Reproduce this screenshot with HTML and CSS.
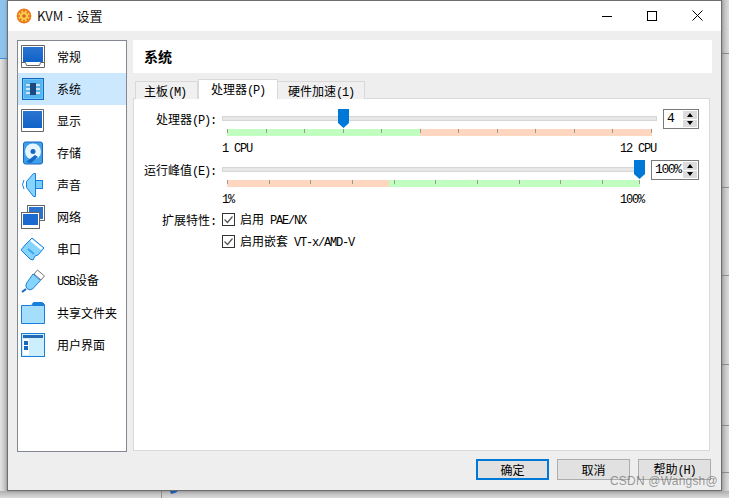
FILE: index.html
```html
<!DOCTYPE html>
<html lang="zh">
<head>
<meta charset="utf-8">
<title>KVM - 设置</title>
<link rel="stylesheet" href="styles.css">
</head>
<body>
<div class="desktop">
  <svg class="backdrop" width="729" height="498" viewBox="0 0 729 498">
    <defs>
      <linearGradient id="rs" x1="0" x2="1" y1="0" y2="0"><stop offset="0" stop-color="#b4b4b4"/><stop offset="1" stop-color="#dcdcdc"/></linearGradient>
      <linearGradient id="ls" x1="0" x2="1" y1="0" y2="0"><stop offset="0" stop-color="#e4e4e4"/><stop offset="1" stop-color="#b8b8b8"/></linearGradient>
      <linearGradient id="bs" x1="0" x2="0" y1="0" y2="1"><stop offset="0" stop-color="#b0b0b0"/><stop offset="1" stop-color="#dadada"/></linearGradient>
    </defs>
    <rect x="722" width="7" height="498" fill="url(#rs)"/>
    <rect y="0" width="7" height="498" fill="url(#ls)"/>
    <rect y="0" width="7" height="58" fill="#8fc2ee"/>
    <rect y="58" width="7" height="1" fill="#3d8fd8"/>
    <rect y="491" width="729" height="7" fill="url(#bs)"/>
    <g fill="#8c8c8c">
      <rect x="722" y="53" width="7" height="1"/><rect x="722" y="187" width="7" height="1"/>
      <rect x="722" y="275" width="7" height="1"/><rect x="722" y="364" width="7" height="1"/>
      <rect x="722" y="425" width="7" height="1"/><rect x="722" y="472" width="7" height="1"/>
      <rect x="161" y="491" width="1" height="7"/>
    </g>
    <path d="M170 491l8 0-3 2-4 1z" fill="#1f63b5"/>
    <g fill="#222"><rect x="219" y="490" width="2" height="1"/><rect x="225" y="490" width="2" height="1"/><rect x="231" y="490" width="2" height="1"/><rect x="237" y="490" width="2" height="1"/></g>
  </svg>

  <div class="window">
    <header class="titlebar">
      <svg class="app-icon" width="16" height="16" viewBox="0 0 16 16">
        <circle cx="8" cy="8" r="7.4" fill="#e87d1e"/>
        <circle cx="8" cy="8" r="5.8" fill="#f7c94a"/>
        <g fill="#e8661c"><circle cx="8" cy="3" r="1"/><circle cx="8" cy="13" r="1"/><circle cx="3" cy="8" r="1"/><circle cx="13" cy="8" r="1"/><circle cx="4.5" cy="4.5" r="1"/><circle cx="11.5" cy="4.5" r="1"/><circle cx="4.5" cy="11.5" r="1"/><circle cx="11.5" cy="11.5" r="1"/></g>
        <rect x="6.6" y="6.6" width="2.8" height="2.8" fill="#d9541e"/>
      </svg>
      <span class="title-text">KVM - 设置</span>
      <div class="controls">
        <svg width="10" height="10" viewBox="0 0 10 10"><path d="M0 5.5h10" stroke="#000" fill="none"/></svg>
        <svg width="10" height="10" viewBox="0 0 10 10"><rect x=".5" y=".5" width="9" height="9" stroke="#000" fill="none"/></svg>
        <svg width="11" height="11" viewBox="0 0 11 11"><path d="M.5.5l10 10M10.500.5l-10 10" stroke="#000" fill="none"/></svg>
      </div>
    </header>

    <div class="content">
      <nav class="sidebar">
        <div class="nav-row">
          <svg class="nav-icon" viewBox="0 0 24 24"><use href="#i-monitor"/></svg><span>常规</span>
        </div>
        <div class="nav-row is-active">
          <svg class="nav-icon" viewBox="0 0 24 24">
            <rect x="1.500" y="1.500" width="21" height="21" fill="#6cc6f5" stroke="#1467c4" stroke-width="1"/>
            <rect x="3" y="3" width="18" height="18" fill="#55b4ee"/>
            <g fill="#cfe6f8"><rect x="5" y="7" width="14" height="2"/><rect x="5" y="11" width="14" height="2"/><rect x="5" y="15" width="14" height="2"/></g>
            <rect x="9" y="6" width="6" height="12" fill="#1c4a7e"/>
          </svg><span>系统</span>
        </div>
        <div class="nav-row">
          <svg class="nav-icon" viewBox="0 0 24 24"><use href="#i-monitor2"/></svg><span>显示</span>
        </div>
        <div class="nav-row">
          <svg class="nav-icon" viewBox="0 0 24 24">
            <rect x="2.500" y="1" width="19" height="22" rx="2" fill="#3f9fe8" stroke="#1467c4"/>
            <circle cx="12" cy="10.500" r="8" fill="#e6f5fd"/>
            <circle cx="12" cy="10.500" r="2.500" fill="#1467c4"/>
            <path d="M5 21l9-7 3 2-7 6z" fill="#1467c4"/>
          </svg><span>存储</span>
        </div>
        <div class="nav-row">
          <svg class="nav-icon" viewBox="0 0 24 24">
            <path d="M5.500 8.500l7-8h2v23h-2l-7-9z" fill="#86d4fb" stroke="#1a7fdc"/>
            <rect x="14.500" y="7.500" width="7" height="8" fill="#74cdfa" stroke="#1a7fdc"/>
            <path d="M3 7q-3 4.500 0 9" stroke="#1a7fdc" fill="none"/>
          </svg><span>声音</span>
        </div>
        <div class="nav-row">
          <svg class="nav-icon" viewBox="0 0 24 24">
            <rect x="6.500" y=".5" width="17" height="15" fill="#fff" stroke="#666"/>
            <rect x="8" y="2" width="14" height="12" fill="#2a72cc"/>
            <rect x=".5" y="7.500" width="18" height="16" fill="#fff" stroke="#666"/>
            <rect x="2" y="9" width="15" height="11" fill="#1a6ad0"/>
          </svg><span>网络</span>
        </div>
        <div class="nav-row">
          <svg class="nav-icon" viewBox="0 0 24 24">
            <path d="M4 8l7-7 12 10-6 7-3 1-2 4-3-1-9-9z" fill="#86d4fb" stroke="#1a7fdc"/>
            <path d="M10 3l11 9" stroke="#fff" stroke-width="2.500" fill="none"/>
            <path d="M7 12l6 5" stroke="#3da5ee" stroke-width="2" fill="none"/>
          </svg><span>串口</span>
        </div>
        <div class="nav-row">
          <svg class="nav-icon" viewBox="0 0 24 24">
            <path d="M16.500 1l7 6-3.500 4-7-6z" fill="#fff" stroke="#777"/>
            <path d="M12 5l7.500 6.500-8 8.500q-3 2-5.500-.5-2.500-2.500 0-6z" fill="#86d4fb" stroke="#1a7fdc"/>
            <path d="M5 20l-4 3" stroke="#1467c4" stroke-width="2" fill="none"/>
          </svg><span><span class="lat">USB</span>设备</span>
        </div>
        <div class="nav-row">
          <svg class="nav-icon" viewBox="0 0 24 24">
            <path d="M.5 4.500h10l2-3h9l2 2v19h-23z" fill="#a4defb" stroke="#1a7fdc"/>
            <path d="M12 2h11v3H11z" fill="#1a7fdc"/>
          </svg><span>共享文件夹</span>
        </div>
        <div class="nav-row">
          <svg class="nav-icon" viewBox="0 0 24 24">
            <rect x=".5" y=".5" width="23" height="23" fill="#cdeefd" stroke="#1a7fdc"/>
            <rect x="2" y="2" width="20" height="3" fill="#2469b8"/>
            <rect x="2" y="6" width="6" height="16" fill="#fff"/>
            <rect x="3" y="8" width="4" height="4" fill="#1a66c0"/><rect x="3" y="13" width="4" height="4" fill="#1a66c0"/>
          </svg><span>用户界面</span>
        </div>
      </nav>

      <main class="main">
        <h1 class="page-title">系统</h1>
        <div class="tabs">
          <div class="tab">主板<span class="lat">(M)</span></div>
          <div class="tab is-active">处理器<span class="lat">(P)</span></div>
          <div class="tab">硬件加速<span class="lat">(1)</span></div>
        </div>
        <section class="panel">
          <div class="form">
            <div class="label">处理器<span class="lat">(P):</span></div>
            <div class="field">
              <div class="slider slider-cpu">
                <div class="track"></div>
                <svg class="thumb thumb-cpu" width="11" height="19" viewBox="0 0 11 19"><path d="M0 0h11v14l-5.500 5L0 14z" fill="#0078d7"/></svg>
                <div class="band">
                  <div class="seg green seg-cpu-a"></div>
                  <div class="seg peach seg-cpu-b"></div>
                  <div class="ticks">
                    <i></i><i></i><i></i><i></i><i></i><i></i><i></i><i></i><i></i><i></i><i></i><i></i>
                  </div>
                </div>
                <div class="legend"><span class="lat">1 CPU</span><span class="lat">12 CPU</span></div>
              </div>
              <div class="spin spin-s">
                <span class="lat spin-val">4</span>
                <div class="spin-btns"><b class="up"></b><b class="down"></b></div>
              </div>
            </div>

            <div class="label">运行峰值<span class="lat">(E):</span></div>
            <div class="field">
              <div class="slider slider-exec">
                <div class="track"></div>
                <svg class="thumb thumb-exec" width="11" height="19" viewBox="0 0 11 19"><path d="M0 0h11v14l-5.500 5L0 14z" fill="#0078d7"/></svg>
                <div class="band">
                  <div class="seg peach seg-exec-a"></div>
                  <div class="seg green seg-exec-b"></div>
                  <div class="ticks ticks-exec">
                    <i></i><i></i><i></i><i></i><i></i><i></i><i></i><i></i><i></i><i></i>
                  </div>
                  <i class="tick-end"></i>
                </div>
                <div class="legend"><span class="lat">1%</span><span class="lat">100%</span></div>
              </div>
              <div class="spin spin-l">
                <span class="lat spin-val">100%</span>
                <div class="spin-btns"><b class="up"></b><b class="down"></b></div>
              </div>
            </div>

            <div class="label label-ext">扩展特性<span class="lat">:</span></div>
            <div class="checks">
              <label class="check"><svg class="box" width="13" height="13" viewBox="0 0 13 13"><rect x=".5" y=".5" width="12" height="12" fill="#fff" stroke="#333"/><path d="M2.500 6.500l3 3 5-6" stroke="#555" stroke-width="1.200" fill="none"/></svg><span>启用<span class="lat">PAE/NX</span></span></label>
              <label class="check"><svg class="box" width="13" height="13" viewBox="0 0 13 13"><rect x=".5" y=".5" width="12" height="12" fill="#fff" stroke="#333"/><path d="M2.500 6.500l3 3 5-6" stroke="#555" stroke-width="1.200" fill="none"/></svg><span>启用嵌套<span class="lat">VT-x/AMD-V</span></span></label>
            </div>
          </div>
        </section>
      </main>
    </div>

    <footer class="footer">
      <button class="btn btn-default">确定</button>
      <button class="btn">取消</button>
      <button class="btn">帮助<span class="lat">(H)</span></button>
    </footer>
  </div>

  <div class="watermark">CSDN @Wangsh@</div>

  <svg class="defs" width="0" height="0">
    <defs>
      <linearGradient id="scr" x1="0" x2="0" y1="0" y2="1"><stop offset="0" stop-color="#2b74d0"/><stop offset="1" stop-color="#0f62c8"/></linearGradient>
      <g id="i-monitor">
        <path d="M.5.500h23v22H.5z" fill="#fff" stroke="#666"/>
        <rect x="2" y="2" width="20" height="15" fill="url(#scr)"/>
        <path d="M.5 17.500h4l1 3h13l1-3h4" stroke="#666" fill="none"/>
      </g>
      <g id="i-monitor2">
        <path d="M.5.500h22v22H.5z" fill="#fff" stroke="#666"/>
        <rect x="2" y="2" width="19" height="17" fill="url(#scr)"/>
      </g>
    </defs>
  </svg>
</div>
</body>
</html>
```
FILE: styles.css
```css
* { box-sizing: border-box; }
html, body { margin: 0; padding: 0; }
body {
  width: 729px;
  height: 498px;
  overflow: hidden;
  font-family: "Noto Sans CJK SC", sans-serif;
  font-size: 12px;
  color: #000;
  background: #d4d4d4;
}
.desktop { position: relative; width: 729px; height: 498px; overflow: hidden; }
.backdrop { position: absolute; left: 0; top: 0; }
.defs { position: absolute; }

.lat {
  font-family: "Liberation Mono", monospace;
  font-size: 12px;
  letter-spacing: -1.2px;
}

.window {
  position: absolute;
  left: 7px;
  top: 0;
  width: 715px;
  height: 491px;
  display: flex;
  flex-direction: column;
  background: #eeeeee;
  border: 1px solid #6e6e6e;
  box-shadow: 0 0 3px rgba(0, 0, 0, .25);
}

.titlebar {
  height: 30px;
  flex: none;
  display: flex;
  align-items: center;
  padding: 0 0 1px 8px;
  background: #fff;
}
.title-text { margin-left: 5px; font-size: 13px; line-height: 16px; color: #111; word-spacing: 1.5px; }
.controls { margin-left: auto; display: flex; align-items: center; gap: 35px; padding-right: 18px; }
.controls svg { display: block; }

.content { flex: none; height: 421px; display: flex; gap: 6px; padding: 9px 9px 0; }

.sidebar {
  width: 110px;
  height: 412px;
  flex: none;
  background: #fff;
  border: 1px solid #828790;
}
.nav-row { height: 32px; display: flex; align-items: center; padding-left: 3px; line-height: 16px; }
.nav-row.is-active { background: #cce8ff; }
.nav-icon { width: 24px; height: 24px; flex: none; margin-right: 12px; display: block; }

.main { width: 579px; flex: none; display: flex; flex-direction: column; }
.page-title {
  height: 33px;
  margin: 0 0 6px;
  padding-left: 11px;
  background: #fff;
  font-size: 14px;
  font-weight: 700;
  line-height: 32px;
}

.tabs { display: flex; align-items: flex-end; height: 20px; margin: 0 0 -1px 2px; position: relative; z-index: 1; }
.tab {
  height: 18px;
  padding: 0 8px;
  background: #f0f0f0;
  border: 1px solid #d9d9d9;
  border-bottom: 0;
  line-height: 17px;
  white-space: nowrap;
}
.tab:first-child { width: 63px; }
.tab:nth-child(2) { width: 80px; height: 20px; padding: 0 12px; background: #fff; line-height: 18px; }
.tab:nth-child(3) { width: 87px; margin-left: 0; padding: 0 10px; border-left: 0; }

.panel {
  width: 577px;
  height: 353px;
  background: #fff;
  border: 1px solid #d9d9d9;
  padding-top: 10px;
}
.form { display: grid; grid-template-columns: 82px 1fr; column-gap: 6px; row-gap: 7px; align-items: start; }
.label { text-align: right; line-height: 19px; }
.label-ext { margin-top: 2px; line-height: 14px; }

.field { display: flex; gap: 6px; align-items: flex-start; padding-right: 10px; }
.slider { position: relative; flex: 1; height: 44px; padding-top: 7px; }
.track { height: 5px; background: #e7e7e7; border: 1px solid #d6d6d6; }
.thumb { position: absolute; top: 0; display: block; }
.thumb-cpu { left: 116px; }
.thumb-exec { right: 0; }

.band { position: relative; display: flex; height: 7px; margin: 8px 5px 0; }
.seg { height: 100%; }
.green { background: #c0ffc0; }
.peach { background: #ffd6c0; }
.seg-cpu-a { width: 193px; }
.seg-cpu-b { flex: 1; }
.seg-exec-a { width: 162px; }
.seg-exec-b { flex: 1; }
.ticks { position: absolute; left: 0; right: 0; top: 0; display: flex; justify-content: space-between; }
.ticks i, .tick-end { display: block; width: 1px; height: 4px; background: #9a9a8f; }
.ticks-exec { right: 37px; }
.tick-end { position: absolute; right: 0; top: 0; }

.legend { display: flex; justify-content: space-between; margin-top: 7px; padding-right: 1px; line-height: 12px; height: 12px; }

.spin {
  flex: none;
  height: 20px;
  display: flex;
  align-items: center;
  justify-content: space-between;
  background: #fff;
  border: 1px solid #7a7a7a;
  padding: 1px;
}
.spin-s { width: 36px; }
.spin-l { width: 48px; }
.spin-val { padding-left: 2px; line-height: 16px; font-size: 13px; letter-spacing: -1.400px; }
.spin-btns { width: 14px; height: 100%; display: flex; flex-direction: column; gap: 1px; }
.spin-btns b {
  flex: 1;
  display: flex;
  align-items: center;
  justify-content: center;
  background: #dcdcdc;
}
.spin-btns b::after { content: ""; border-left: 3px solid transparent; border-right: 3px solid transparent; }
.spin-btns .up::after { border-bottom: 4px solid #000; }
.spin-btns .down::after { border-top: 4px solid #000; }

.checks { display: flex; flex-direction: column; gap: 9px; margin-top: 2px; }
.check { display: flex; align-items: center; gap: 5px; height: 13px; line-height: 13px; }
.check .lat { margin-left: 6px; }
.box { display: block; flex: none; }

.footer { flex: 1; display: flex; justify-content: flex-end; gap: 8px; padding: 7px 10px 0 0; }
.btn {
  width: 73px;
  height: 21px;
  padding: 0;
  font: inherit;
  line-height: 17px;
  color: #000;
  background: #e1e1e1;
  border: 1px solid #adadad;
}
.btn-default { border: 2px solid #0078d7; }

.watermark {
  position: absolute;
  left: 610px;
  top: 474px;
  font-family: "Liberation Sans", sans-serif;
  font-size: 12px;
  line-height: 14px;
  letter-spacing: .2px;
  color: rgba(90, 90, 90, .6);
  white-space: nowrap;
}
```
